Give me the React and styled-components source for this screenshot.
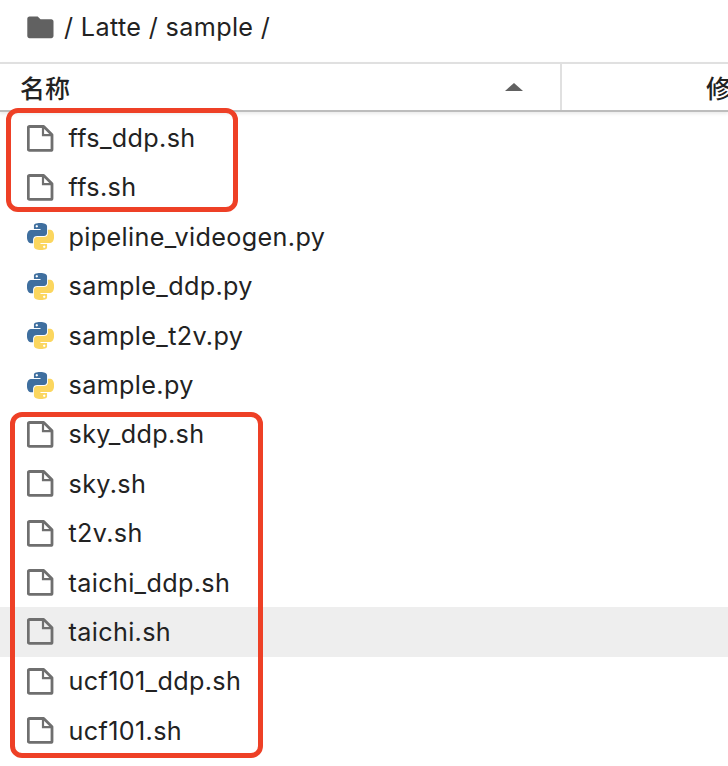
import React from 'react';
import styled, { createGlobalStyle } from 'styled-components';

const GlobalStyle = createGlobalStyle`
  html, body {
    margin: 0;
    padding: 0;
    background: #fff;
  }
`;

const Page = styled.div`
  position: relative;
  width: 728px;
  height: 766px;
  overflow: hidden;
  font-family: Inter, 'Liberation Sans', 'Noto Sans CJK SC', sans-serif;
  color: #222;
`;

const Breadcrumbs = styled.div`
  display: flex;
  align-items: center;
  gap: 10px;
  height: 62px;
  padding: 0 0 8px 27px;
  box-sizing: border-box;
  font-size: 25.2px;
  letter-spacing: 0.35px;
`;

const Header = styled.div`
  display: flex;
  height: 50px;
  box-sizing: border-box;
  border-top: 2px solid #e0e0e0;
  border-bottom: 2px solid #bdbdbd;
  box-shadow: 0 2px 3px rgba(0, 0, 0, 0.08);
`;

const NameCell = styled.div`
  display: flex;
  flex: none;
  align-items: center;
  justify-content: space-between;
  width: 562px;
  height: 100%;
  padding: 0 37px 0 20px;
  box-sizing: border-box;
  border-right: 2px solid #e0e0e0;
`;

const ModifiedCell = styled.div`
  flex: 1;
  padding-left: 144px;
  line-height: 46px;
  white-space: nowrap;
  overflow: hidden;
`;

const HeaderText = styled.span`
  font-family: 'Noto Sans CJK SC', sans-serif;
  font-size: 25px;
  font-weight: 500;
`;

const SortArrow = styled.span`
  width: 0;
  height: 0;
  border-left: 9px solid transparent;
  border-right: 9px solid transparent;
  border-bottom: 8px solid #616161;
`;

const List = styled.div`
  display: flex;
  flex-direction: column;
  padding-top: 1.4px;
`;

const Row = styled.div`
  display: flex;
  align-items: center;
  gap: 14.5px;
  height: 49.4px;
  padding-left: 27px;
  font-size: 25.2px;
  letter-spacing: 0.35px;
  background: ${props => (props.$active ? '#eeeeee' : 'transparent')};
`;

const IconBox = styled.svg`
  display: block;
  flex: none;
  width: 27px;
  height: 27px;
`;

const Callout = styled.div`
  position: absolute;
  left: ${props => props.$left}px;
  top: ${props => props.$top}px;
  width: ${props => props.$width}px;
  height: ${props => props.$height}px;
  box-sizing: border-box;
  border: 5px solid #ee4026;
  border-radius: 12px;
  pointer-events: none;
`;

const FolderIcon = () => (
  <IconBox viewBox="0 0 27 27">
    <path fill="#616161" d="M2.5 2.5h8.2l2.8 2.7h10.8c1.2 0 2.2 1 2.2 2.2V22c0 1.2-1 2.2-2.2 2.2H2.5C1.3 24.2.3 23.2.3 22V4.7c0-1.2 1-2.2 2.2-2.2z" />
  </IconBox>
);

const FileIcon = () => (
  <IconBox viewBox="0 0 27 27">
    <path fill="none" stroke="#6f6f6f" strokeWidth="2.8" strokeLinejoin="round" d="M2.5 1.5h14.2L25 9.8v14.4c0 .7-.5 1.2-1.2 1.2H2.5c-.7 0-1.2-.5-1.2-1.2V2.7c0-.7.5-1.2 1.2-1.2z" />
    <path fill="none" stroke="#6f6f6f" strokeWidth="2.2" d="M16 2v8.2h8.8" />
  </IconBox>
);

const PythonIcon = () => (
  <IconBox viewBox="0 0 24 24">
    <path fill="#3f6f9f" fillRule="evenodd" d="M14.25.18l.9.2.73.26.59.3.45.32.34.34.25.34.16.33.1.3.04.26.02.2-.01.13V8.5l-.05.63-.13.55-.21.46-.26.38-.3.31-.33.25-.35.19-.35.14-.33.1-.3.07-.26.04-.21.02H8.77l-.69.05-.59.14-.5.22-.41.27-.33.32-.27.35-.2.36-.15.37-.1.35-.07.32-.04.27-.02.21v3.06H3.17l-.21-.03-.28-.07-.32-.12-.35-.18-.36-.26-.36-.36-.35-.46-.32-.59-.28-.73-.21-.88-.14-1.05-.05-1.23.06-1.22.16-1.04.24-.87.32-.71.36-.57.4-.44.42-.33.42-.24.4-.16.36-.1.32-.05.24-.01h.16l.06.01h8.16v-.83H6.18l-.01-2.75-.02-.37.05-.34.11-.31.17-.28.25-.26.31-.23.38-.2.44-.18.51-.15.58-.12.64-.1.71-.06.77-.04.84-.02 1.27.05zM7.95 2.16l-.23.33-.08.41.08.41.23.34.33.22.41.09.41-.09.33-.22.23-.34.08-.41-.08-.41-.23-.33-.33-.22-.41-.09-.41.09z" />
    <path fill="#fbd65e" fillRule="evenodd" d="M21.04 6.11l.28.06.32.12.35.18.36.27.36.35.35.47.32.59.28.73.21.88.14 1.04.05 1.23-.06 1.23-.16 1.04-.24.86-.32.71-.36.57-.4.45-.42.33-.42.24-.4.16-.36.09-.32.05-.24.02-.16-.01h-8.22v.82h5.84l.01 2.76.02.36-.05.34-.11.31-.17.29-.25.25-.31.24-.38.2-.44.17-.51.15-.58.13-.64.09-.71.07-.77.04-.84.01-1.27-.04-1.07-.14-.9-.2-.73-.25-.59-.3-.45-.33-.34-.34-.25-.34-.16-.33-.1-.3-.04-.25-.02-.2.01-.13v-5.34l.05-.64.13-.54.21-.46.26-.38.3-.32.33-.24.35-.2.35-.14.33-.1.3-.06.26-.04.21-.02.13-.01h5.84l.69-.05.59-.14.5-.21.41-.28.33-.32.27-.35.2-.36.15-.36.1-.35.07-.32.04-.28.02-.21V6.07h2.09l.14.01zM14.57 20.36l-.23.33-.08.41.08.41.23.33.33.23.41.08.41-.08.33-.23.23-.33.08-.41-.08-.41-.23-.33-.33-.23-.41-.08-.41.08z" />
  </IconBox>
);

const files = [
  'ffs_ddp.sh',
  'ffs.sh',
  'pipeline_videogen.py',
  'sample_ddp.py',
  'sample_t2v.py',
  'sample.py',
  'sky_ddp.sh',
  'sky.sh',
  't2v.sh',
  'taichi_ddp.sh',
  'taichi.sh',
  'ucf101_ddp.sh',
  'ucf101.sh',
];

export default function App() {
  return (
    <Page>
      <GlobalStyle />
      <Breadcrumbs>
        <FolderIcon />
        <span>/ Latte / sample /</span>
      </Breadcrumbs>
      <Header>
        <NameCell>
          <HeaderText>名称</HeaderText>
          <SortArrow />
        </NameCell>
        <ModifiedCell>
          <HeaderText>修改时间</HeaderText>
        </ModifiedCell>
      </Header>
      <List>
        {files.map(name => (
          <Row key={name} $active={name === 'taichi.sh'}>
            {name.endsWith('.py') ? <PythonIcon /> : <FileIcon />}
            <span>{name}</span>
          </Row>
        ))}
      </List>
      <Callout $left={6} $top={108} $width={232} $height={104} />
      <Callout $left={10} $top={412} $width={253} $height={346} />
    </Page>
  );
}
